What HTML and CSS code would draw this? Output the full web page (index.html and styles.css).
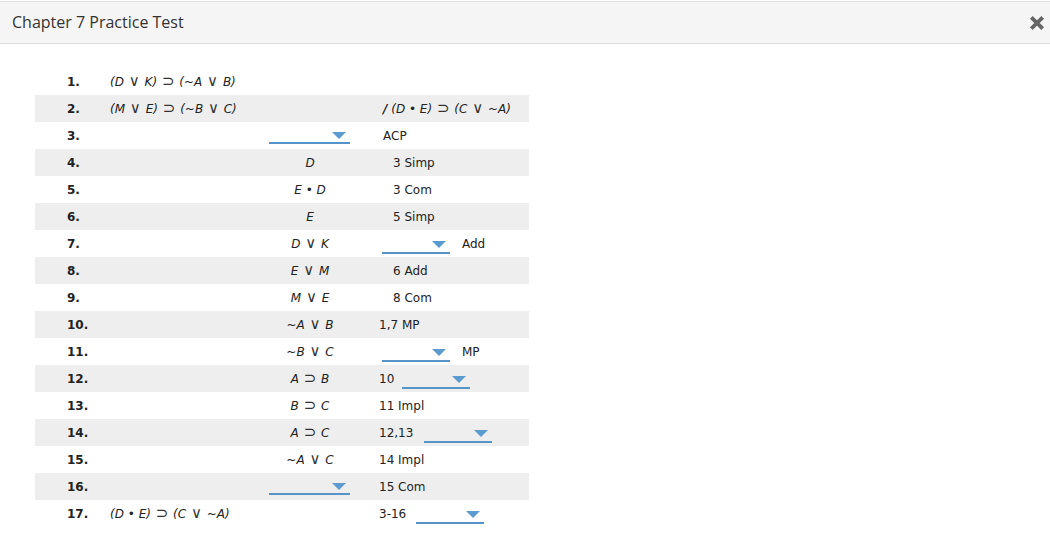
FILE: index.html
```html
<!DOCTYPE html>
<html>
<head>
<meta charset="utf-8">
<link rel="stylesheet" href="styles.css">
</head>
<body>
<div class="header">
  <div class="title">Chapter 7 Practice Test</div>
  <svg class="close" width="16" height="16" viewBox="0 0 16 16"><path d="M2.3 2.3 L13.7 13.7 M13.7 2.3 L2.3 13.7" stroke="#666" stroke-width="3.8" stroke-linecap="butt"/></svg>
</div>
<div class="proof">
  <div class="row"><div class="num">1.</div><div class="prem">(D <span class="op">∨</span> K) <span class="op">⊃</span> (~A <span class="op">∨</span> B)</div><div class="mid"></div><div class="just"></div></div>
  <div class="row shade"><div class="num">2.</div><div class="prem">(M <span class="op">∨</span> E) <span class="op">⊃</span> (~B <span class="op">∨</span> C)</div><div class="mid"></div><div class="just p4"><span class="it"><b class="slash">/</b> (D • E) <span class="op">⊃</span> (C <span class="op">∨</span> ~A)</span></div></div>
  <div class="row"><div class="num">3.</div><div class="prem"></div><div class="mid"><span class="dd wide"><i class="tri"></i></span></div><div class="just p4">ACP</div></div>
  <div class="row shade"><div class="num">4.</div><div class="prem"></div><div class="mid it">D</div><div class="just p14">3 Simp</div></div>
  <div class="row"><div class="num">5.</div><div class="prem"></div><div class="mid it">E • D</div><div class="just p14">3 Com</div></div>
  <div class="row shade"><div class="num">6.</div><div class="prem"></div><div class="mid it">E</div><div class="just p14">5 Simp</div></div>
  <div class="row"><div class="num">7.</div><div class="prem"></div><div class="mid it">D <span class="op">∨</span> K</div><div class="just p3"><span class="dd"><i class="tri"></i></span><span class="rule">Add</span></div></div>
  <div class="row shade"><div class="num">8.</div><div class="prem"></div><div class="mid it">E <span class="op">∨</span> M</div><div class="just p14">6 Add</div></div>
  <div class="row"><div class="num">9.</div><div class="prem"></div><div class="mid it">M <span class="op">∨</span> E</div><div class="just p14">8 Com</div></div>
  <div class="row shade"><div class="num">10.</div><div class="prem"></div><div class="mid it">~A <span class="op">∨</span> B</div><div class="just">1,7 MP</div></div>
  <div class="row"><div class="num">11.</div><div class="prem"></div><div class="mid it">~B <span class="op">∨</span> C</div><div class="just p3"><span class="dd"><i class="tri"></i></span><span class="rule">MP</span></div></div>
  <div class="row shade"><div class="num">12.</div><div class="prem"></div><div class="mid it">A <span class="op">⊃</span> B</div><div class="just"><span>10</span><span class="dd g8"><i class="tri"></i></span></div></div>
  <div class="row"><div class="num">13.</div><div class="prem"></div><div class="mid it">B <span class="op">⊃</span> C</div><div class="just">11 Impl</div></div>
  <div class="row shade"><div class="num">14.</div><div class="prem"></div><div class="mid it">A <span class="op">⊃</span> C</div><div class="just"><span>12,13</span><span class="dd g11"><i class="tri"></i></span></div></div>
  <div class="row"><div class="num">15.</div><div class="prem"></div><div class="mid it">~A <span class="op">∨</span> C</div><div class="just">14 Impl</div></div>
  <div class="row shade"><div class="num">16.</div><div class="prem"></div><div class="mid"><span class="dd wide"><i class="tri"></i></span></div><div class="just">15 Com</div></div>
  <div class="row"><div class="num">17.</div><div class="prem">(D • E) <span class="op">⊃</span> (C <span class="op">∨</span> ~A)</div><div class="mid"></div><div class="just"><span>3-16</span><span class="dd g10"><i class="tri"></i></span></div></div>
</div>
</body>
</html>
```
FILE: styles.css
```css
html, body {
  margin: 0;
  padding: 0;
  background: #fff;
}
body {
  font-family: "DejaVu Sans", Verdana, sans-serif;
  font-size: 12px;
  color: #222;
}
.header {
  margin-top: 1px;
  height: 41px;
  background: #f5f5f5;
  border-top: 1px solid #e2e2e2;
  border-bottom: 1px solid #dcdcdc;
  display: flex;
  align-items: center;
  justify-content: space-between;
  padding: 0 5px 0 12px;
}
.title {
  font-family: "Open Sans", sans-serif;
  font-size: 16px;
  color: #333;
  padding-bottom: 1px;
}
.close {
  display: block;
}
.proof {
  margin: 24px 0 0 35px;
  width: 494px;
}
.row {
  display: grid;
  grid-template-columns: 75px 150px 100px 169px;
  height: 27px;
  align-items: center;
}
.row.shade {
  background: #eeeeee;
}
.num {
  font-weight: bold;
  padding-left: 32px;
}
.prem {
  font-style: italic;
  white-space: nowrap;
}
.mid {
  display: flex;
  justify-content: center;
  align-items: center;
  white-space: nowrap;
}
.mid.it {
  display: block;
  text-align: center;
}
.it {
  font-style: italic;
}
.op {
  font-style: normal;
  font-size: 15px;
  line-height: 12px;
  margin: 0 1px;
  color: #333;
}
.just {
  padding-left: 19px;
  white-space: nowrap;
  display: flex;
  align-items: center;
}
.just.p4 { padding-left: 23px; }
.just.p14 { padding-left: 33px; }
.just.p3 { padding-left: 22px; }
.slash {
  font-weight: bold;
  font-style: italic;
}
.dd {
  display: inline-flex;
  justify-content: flex-end;
  align-items: flex-start;
  box-sizing: border-box;
  width: 68px;
  height: 16px;
  margin-top: 1px;
  padding: 4px 4px 0 0;
  border-bottom: 2px solid #5593c8;
}
.dd.wide {
  width: 81px;
  margin-left: -1px;
}
.just .dd {
  margin-top: 4px;
  height: 17px;
}
.g8 { margin-left: 8px; }
.g10 { margin-left: 10px; }
.g11 { margin-left: 11px; }
.tri {
  display: block;
  width: 0;
  height: 0;
  border-left: 7px solid transparent;
  border-right: 7px solid transparent;
  border-top: 7px solid #5b9bd0;
}
.rule {
  margin-left: 12px;
}
```
